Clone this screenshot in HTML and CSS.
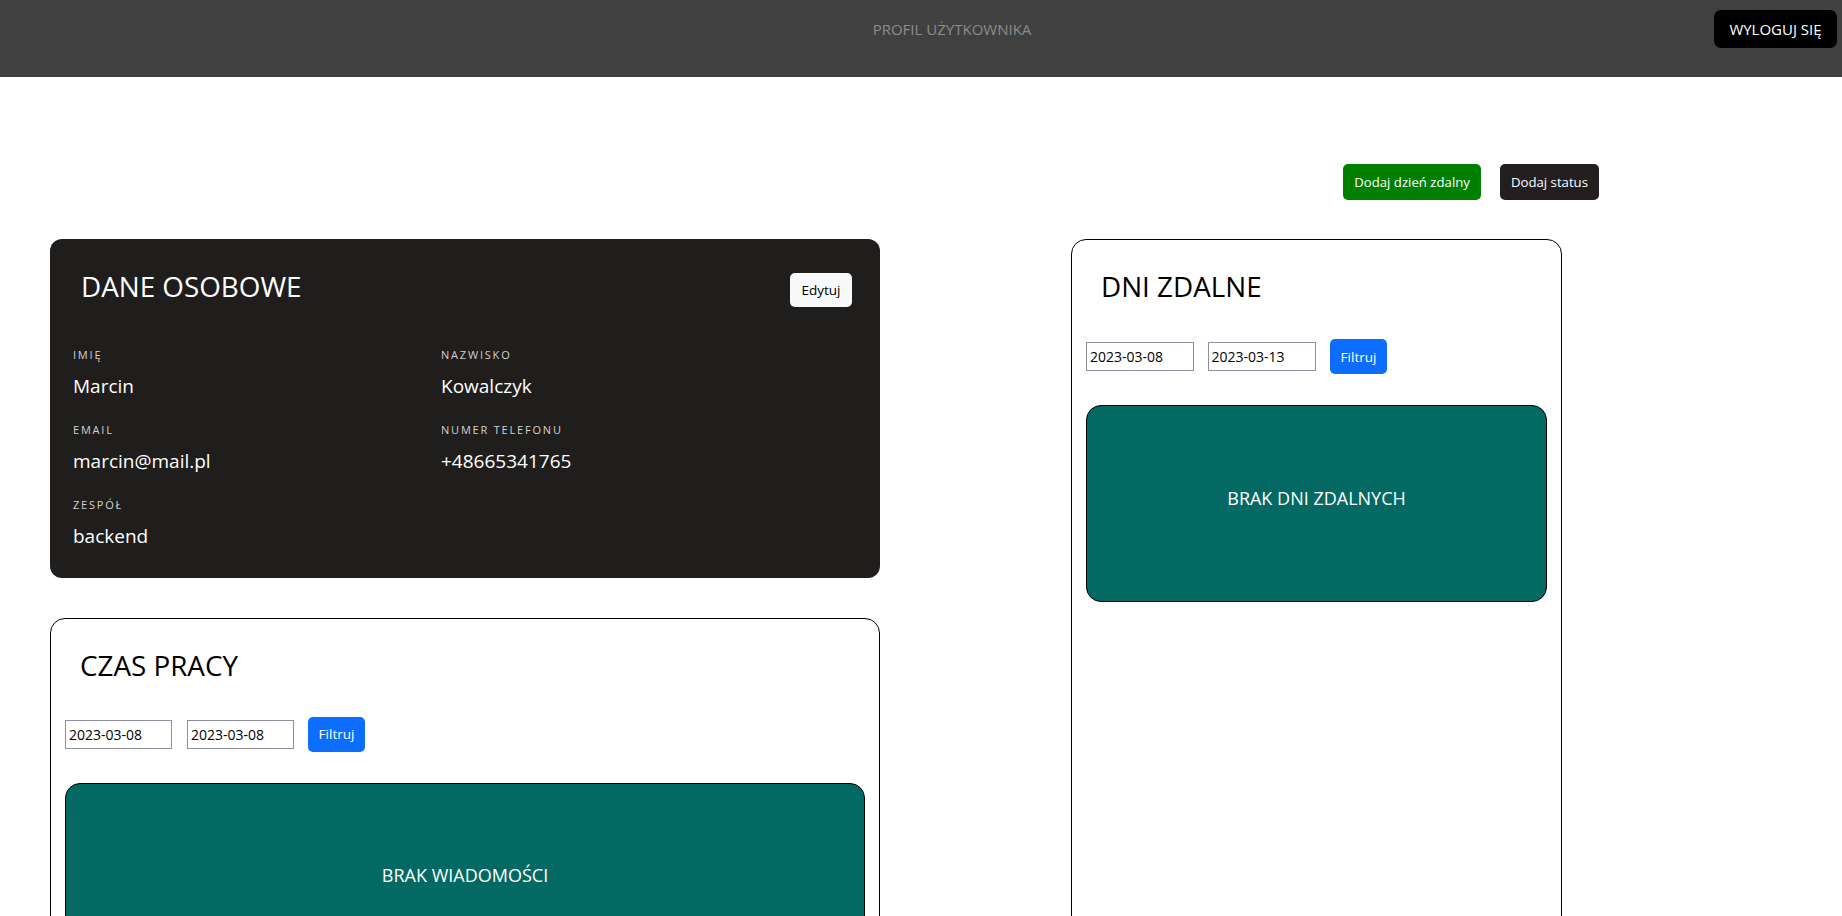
FILE: index.html
```html
<!DOCTYPE html>
<html lang="pl">
<head>
<meta charset="utf-8">
<title>Profil użytkownika</title>
<link rel="stylesheet" href="styles.css">
</head>
<body>
<header class="topbar">
  <div class="topbar-title">PROFIL UŻYTKOWNIKA</div>
  <button class="btn-logout">WYLOGUJ SIĘ</button>
</header>
<main class="page">
  <div class="actions">
    <button class="btn btn-green">Dodaj dzień zdalny</button>
    <button class="btn btn-dark">Dodaj status</button>
  </div>
  <div class="columns">
    <div class="col-left">
      <section class="card-dark">
        <div class="card-head">
          <h2 class="card-title">DANE OSOBOWE</h2>
          <button class="btn-light">Edytuj</button>
        </div>
        <div class="fields">
          <div class="field">
            <div class="field-label">Imię</div>
            <div class="field-value">Marcin</div>
          </div>
          <div class="field">
            <div class="field-label">Nazwisko</div>
            <div class="field-value">Kowalczyk</div>
          </div>
          <div class="field">
            <div class="field-label">Email</div>
            <div class="field-value">marcin@mail.pl</div>
          </div>
          <div class="field">
            <div class="field-label">Numer telefonu</div>
            <div class="field-value">+48665341765</div>
          </div>
          <div class="field">
            <div class="field-label">Zespół</div>
            <div class="field-value">backend</div>
          </div>
        </div>
      </section>
      <section class="card-outline">
        <h2 class="card-title outline-title">CZAS PRACY</h2>
        <div class="filter-row filter-row-work">
          <input class="date-input" type="text" value="2023-03-08">
          <input class="date-input" type="text" value="2023-03-08">
          <button class="btn-primary">Filtruj</button>
        </div>
        <div class="empty-box">BRAK WIADOMOŚCI</div>
      </section>
    </div>
    <div class="col-right">
      <section class="card-outline card-tall">
        <h2 class="card-title outline-title">DNI ZDALNE</h2>
        <div class="filter-row filter-row-remote">
          <input class="date-input date-wide" type="text" value="2023-03-08">
          <input class="date-input date-wide" type="text" value="2023-03-13">
          <button class="btn-primary">Filtruj</button>
        </div>
        <div class="empty-box">BRAK DNI ZDALNYCH</div>
      </section>
    </div>
  </div>
</main>
</body>
</html>
```

FILE: styles.css
```css
* {
  box-sizing: border-box;
}

body {
  margin: 0;
  font-family: "Open Sans", "Noto Sans", sans-serif;
  background: #ffffff;
  color: #000000;
}

button {
  font-family: inherit;
  cursor: pointer;
}

.topbar {
  height: 77px;
  background: #404040;
  display: flex;
  align-items: flex-start;
  padding: 10px 5px 0 0;
}

.topbar-title {
  flex: 1;
  text-align: center;
  padding-left: 190px;
  margin-top: 7px;
  font-size: 15px;
  line-height: 24px;
  color: #8c8c8c;
}

.btn-logout {
  width: 123px;
  height: 38px;
  padding: 0;
  background: #000000;
  color: #ffffff;
  border: none;
  border-radius: 7px;
  font-size: 15px;
}

.page {
  padding-left: 50px;
}

.actions {
  display: flex;
  justify-content: flex-end;
  gap: 19px;
  padding-right: 243px;
  margin-top: 87px;
}

.btn {
  height: 36px;
  padding: 0 11px;
  border: none;
  border-radius: 5px;
  color: #ffffff;
  font-size: 13.2px;
}

.btn-green {
  background: #008000;
}

.btn-dark {
  background: #231f20;
}

.columns {
  display: flex;
  align-items: flex-start;
  gap: 191px;
  margin-top: 39px;
}

.col-left {
  width: 830px;
  display: flex;
  flex-direction: column;
  gap: 40px;
}

.col-right {
  width: 491px;
}

.card-dark {
  background: #201d1d;
  border-radius: 12px;
  padding: 29px 28px 28px 23px;
  color: #ffffff;
}

.card-head {
  display: flex;
  justify-content: space-between;
  align-items: flex-start;
  margin-bottom: 40px;
}

.card-title {
  margin: 0;
  font-size: 27.8px;
  line-height: 37px;
  font-weight: 400;
  padding-left: 8px;
}

.btn-light {
  margin-top: 5px;
  width: 62px;
  height: 34px;
  padding: 0;
  background: #f8f9fa;
  color: #000000;
  border: none;
  border-radius: 5px;
  font-size: 13.5px;
}

.fields {
  display: grid;
  grid-template-columns: 368px 1fr;
  row-gap: 22.5px;
}

.field-label {
  font-size: 11px;
  line-height: 16px;
  letter-spacing: 1.8px;
  text-transform: uppercase;
  color: #d2d2d2;
  margin-bottom: 8.5px;
}

.field-value {
  font-size: 19px;
  line-height: 28px;
}

.card-outline {
  border: 1px solid #000000;
  border-radius: 15px;
  padding: 28px 14px 15px 14px;
  background: #ffffff;
}

.card-tall {
  min-height: 760px;
}

.outline-title {
  padding-left: 15px;
}

.filter-row {
  display: flex;
  align-items: center;
  margin-top: 34px;
}

.filter-row-work {
  gap: 15px;
  margin-top: 33px;
}

.filter-row-work .btn-primary {
  margin-left: -1px;
}

.filter-row-remote {
  gap: 13.5px;
}

.filter-row-remote .btn-primary {
  margin-left: 1px;
}

.date-input {
  width: 107px;
  height: 29px;
  border: 1px solid #8f8f9d;
  border-radius: 0;
  padding: 0 3px;
  font-family: inherit;
  font-size: 14px;
  color: #000000;
  background: #ffffff;
}

.date-wide {
  width: 108px;
}

.btn-primary {
  width: 57px;
  height: 35px;
  padding: 0;
  background: #0d6efd;
  color: #ffffff;
  border: none;
  border-radius: 5px;
  font-size: 13.5px;
}

.empty-box {
  margin-top: 31px;
  height: 197px;
  background: #046963;
  border: 1px solid #000000;
  border-radius: 15px;
  display: flex;
  align-items: center;
  justify-content: center;
  padding-bottom: 12px;
  color: #ffffff;
  font-size: 18px;
}
```
